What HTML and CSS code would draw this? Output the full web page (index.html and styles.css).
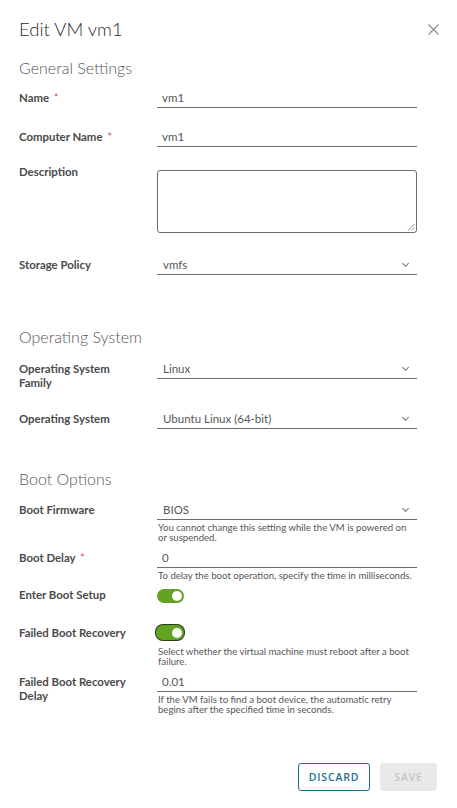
FILE: index.html
```html
<!DOCTYPE html>
<html>
<head>
<meta charset="utf-8">
<link rel="stylesheet" href="styles.css">
</head>
<body>
<div class="modal">
  <div class="header">
    <h1 class="title">Edit VM vm1</h1>
    <button class="close" aria-label="Close">
      <svg width="11" height="11" viewBox="0 0 11 11"><path d="M0.5 0.5 L10.5 10.5 M10.5 0.5 L0.5 10.5" stroke="#8a8a8a" stroke-width="1.1" fill="none"/></svg>
    </button>
  </div>

  <h2 class="section first">General Settings</h2>
  <div class="row">
    <label class="lbl">Name <span class="req">*</span></label>
    <div class="field"><div class="input">vm1</div></div>
  </div>
  <div class="row">
    <label class="lbl">Computer Name <span class="req">*</span></label>
    <div class="field"><div class="input">vm1</div></div>
  </div>
  <div class="row row-desc">
    <label class="lbl">Description</label>
    <div class="field"><div class="textarea"><svg class="grip" width="8" height="8" viewBox="0 0 8 8"><path d="M7.5 1 L1 7.5 M7.5 4.5 L4.5 7.5" stroke="#777" stroke-width="0.8"/></svg></div></div>
  </div>
  <div class="row row-storage">
    <label class="lbl">Storage Policy</label>
    <div class="field"><div class="input select">vmfs<span class="chev"></span></div></div>
  </div>

  <h2 class="section os">Operating System</h2>
  <div class="row">
    <label class="lbl">Operating System<br>Family</label>
    <div class="field"><div class="input select">Linux<span class="chev"></span></div></div>
  </div>
  <div class="row">
    <label class="lbl">Operating System</label>
    <div class="field"><div class="input select">Ubuntu Linux (64-bit)<span class="chev"></span></div></div>
  </div>

  <h2 class="section boot">Boot Options</h2>
  <div class="row row-firmware">
    <label class="lbl">Boot Firmware</label>
    <div class="field">
      <div class="input select">BIOS<span class="chev"></span></div>
      <div class="help">You cannot change this setting while the VM is powered on<br>or suspended.</div>
    </div>
  </div>
  <div class="row row-delay">
    <label class="lbl">Boot Delay <span class="req">*</span></label>
    <div class="field">
      <div class="input">0</div>
      <div class="help">To delay the boot operation, specify the time in milliseconds.</div>
    </div>
  </div>
  <div class="row row-toggle">
    <label class="lbl">Enter Boot Setup</label>
    <div class="field"><span class="toggle"><span class="knob"></span></span></div>
  </div>
  <div class="row row-toggle2">
    <label class="lbl">Failed Boot Recovery</label>
    <div class="field">
      <span class="toggle focused"><span class="knob"></span></span>
      <div class="help help-toggle">Select whether the virtual machine must reboot after a boot<br>failure.</div>
    </div>
  </div>
  <div class="row row-last">
    <label class="lbl">Failed Boot Recovery<br>Delay</label>
    <div class="field">
      <div class="input">0.01</div>
      <div class="help">If the VM fails to find a boot device, the automatic retry<br>begins after the specified time in seconds.</div>
    </div>
  </div>

  <div class="footer">
    <button class="btn btn-outline">DISCARD</button>
    <button class="btn btn-disabled">SAVE</button>
  </div>
</div>
</body>
</html>
```
FILE: styles.css
```css
* { box-sizing: border-box; }
html, body { margin: 0; padding: 0; background: #fff; }
body {
  font-family: Lato, "Open Sans", sans-serif;
  color: #313131;
  width: 457px;
  height: 808px;
  overflow: hidden;
}
.modal { padding: 0 20px 0 19px; }
.header {
  display: flex;
  justify-content: space-between;
  align-items: center;
  height: 58px;
}
.title {
  margin: 0;
  font-size: 18.5px;
  font-weight: 300;
  color: #2b2b2b;
  line-height: 58px;
}
.close {
  border: 0;
  background: none;
  padding: 0;
  margin-right: -2px;
  width: 11px;
  height: 11px;
  display: flex;
}
.section {
  margin: 0;
  font-size: 16px;
  font-weight: 300;
  color: #565656;
  line-height: 20px;
  height: 20px;
}
.section.first { margin-bottom: 10px; }
.section.os { margin-top: 52px; margin-bottom: 12px; }
.section.boot { margin-top: 40px; margin-bottom: 11px; }
.row {
  display: flex;
  align-items: flex-start;
  margin-bottom: 19px;
}
.lbl {
  width: 138px;
  flex: none;
  font-size: 11.4px;
  font-weight: 700;
  color: #4a4a4a;
  line-height: 14px;
  padding-top: 3px;
}
.req { color: #e0565b; font-weight: 400; margin-left: 2px; }
.field { width: 260px; flex: none; }
.input {
  height: 20px;
  border-bottom: 1px solid #6c6c6c;
  font-size: 11.5px;
  color: #565656;
  line-height: 19px;
  padding-left: 5px;
  position: relative;
}
.select { padding-left: 6px; }
.chev {
  position: absolute;
  right: 9px;
  top: 6px;
  width: 5px;
  height: 5px;
  border-right: 1px solid #777;
  border-bottom: 1px solid #777;
  transform: rotate(45deg);
}
.row-desc { margin-top: -2px; margin-bottom: 22px; }
.row-desc .lbl { padding-top: 1px; }
.row-desc .field { padding-top: 6px; }
.textarea {
  height: 63px;
  border: 1px solid #6c6c6c;
  border-radius: 3px;
  position: relative;
}
.grip { position: absolute; right: 1px; bottom: 1px; }
.row-storage { margin-bottom: 0; }
.help {
  font-size: 9.6px;
  line-height: 10px;
  color: #565656;
  padding-left: 1px;
  margin-top: 3px;
  white-space: nowrap;
}
.row-firmware { margin-bottom: 5px; }
.row-delay { margin-bottom: 8px; }
.row-toggle { margin-bottom: 0; height: 36px; }
.row-toggle .lbl { padding-top: 0; margin-top: -1px; }
.row-toggle2 { margin-bottom: 5px; }
.row-toggle2 .lbl { padding-top: 1px; }
.row-last { margin-bottom: 0; }
.toggle {
  display: block;
  width: 27px;
  height: 14px;
  background: #62a420;
  border-radius: 7px;
  position: relative;
}
.knob {
  position: absolute;
  right: 2px;
  top: 2px;
  width: 10px;
  height: 10px;
  border-radius: 50%;
  background: #fff;
}
.toggle.focused {
  width: 28px;
  height: 15px;
  margin-left: -1px;
  box-shadow: 0 0 0 1px #2c3b1b;
}
.toggle.focused .knob { top: 2.5px; }
.help-toggle { margin-top: 7px; }
.footer {
  display: flex;
  justify-content: flex-end;
  gap: 10px;
  margin-top: 48px;
}
.btn {
  height: 28px;
  font-family: "Open Sans", Lato, sans-serif;
  font-size: 10.5px;
  font-weight: 600;
  letter-spacing: 0.8px;
  border-radius: 3px;
  padding: 0;
  text-align: center;
}
.btn-outline {
  width: 72px;
  background: #fff;
  border: 1px solid #1d6f8e;
  color: #1d6f8e;
}
.btn-disabled {
  width: 57px;
  background: #e9e9e9;
  border: 1px solid #e9e9e9;
  color: #c5c5c5;
}
```
